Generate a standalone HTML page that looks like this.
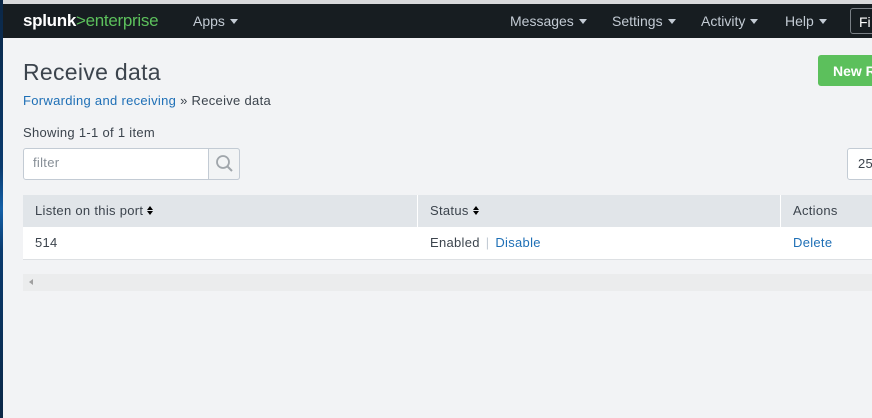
<!DOCTYPE html>
<html><head><style>
body{margin:0;width:872px;height:418px;overflow:hidden;background:#f2f3f5;font-family:"Liberation Sans",sans-serif;position:relative;color:#3c444d}
.a{position:absolute}
.nav{left:0;top:4px;width:872px;height:34px;background:#171d21;color:#c3cbd4;font-size:14px}
.nav span{position:absolute;top:9px}
.car{display:inline-block;border-left:4px solid transparent;border-right:4px solid transparent;border-top:5px solid #c3cbd4;vertical-align:middle;margin-left:5px;margin-top:-2px}
a{color:#1e6fb6;text-decoration:none}
.t13{font-size:13px;letter-spacing:0.3px}
</style></head><body>
<div class="a" style="left:0;top:0;width:872px;height:4px;background:#d8d9db"></div>
<div class="a nav">
<span style="left:23px;top:7px;font-size:17px;font-weight:bold;color:#fff;letter-spacing:-0.3px">splunk<span style="position:static;color:#5cc05c;font-weight:normal">&gt;enterprise</span></span>
<span style="left:193px">Apps<i class="car"></i></span>
<span style="left:510px">Messages<i class="car"></i></span>
<span style="left:612px">Settings<i class="car"></i></span>
<span style="left:701px">Activity<i class="car"></i></span>
<span style="left:785px">Help<i class="car"></i></span>
<div class="a" style="left:850px;top:4px;width:40px;height:26px;border:1px solid #7a8086;border-radius:3px;box-sizing:border-box;color:#fff;padding:5px 0 0 8px">Fi</div>
</div>
<div class="a" style="left:0;top:0;width:3px;height:418px;background:linear-gradient(#0b2746,#0a3a6e 40%,#1460a8 50%,#0a3a6e 60%,#0b2746)"></div>
<div class="a" style="left:23px;top:59px;font-size:23px;letter-spacing:0.3px;color:#3c444d">Receive data</div>
<div class="a t13" style="left:23px;top:93px"><a>Forwarding and receiving</a> » Receive data</div>
<div class="a" style="left:818px;top:55px;width:70px;height:31px;background:#5cc05c;border-radius:3px;color:#fff;font-weight:bold;font-size:14px;padding:8px 0 0 15px;box-sizing:border-box">New R</div>
<div class="a t13" style="left:23px;top:125px">Showing 1-1 of 1 item</div>
<div class="a" style="left:23px;top:148px;width:217px;height:32px;border:1px solid #c3cbd4;border-radius:3px;background:#fff;box-sizing:border-box"></div>
<div class="a t13" style="left:33px;top:155px;color:#868e96">filter</div>
<div class="a" style="left:208px;top:148px;width:32px;height:32px;border:1px solid #c3cbd4;border-radius:0 3px 3px 0;background:#f2f4f5;box-sizing:border-box">
<svg width="30" height="30" style="position:absolute;left:0;top:0"><circle cx="14" cy="13" r="6" fill="none" stroke="#a0a6ab" stroke-width="1.8"/><line x1="18.5" y1="17.5" x2="23" y2="22" stroke="#a0a6ab" stroke-width="2"/></svg></div>
<div class="a t13" style="left:847px;top:148px;width:40px;height:32px;border:1px solid #c3cbd4;border-radius:3px;background:#fff;box-sizing:border-box;padding:7px 0 0 10px">25</div>
<div class="a" style="left:23px;top:195px;width:849px;height:32px;background:#e1e5e9"></div>
<div class="a" style="left:417px;top:195px;width:1px;height:32px;background:#fff"></div>
<div class="a" style="left:780px;top:195px;width:1px;height:32px;background:#fff"></div>
<div class="a t13" style="left:35px;top:203px">Listen on this port <svg width="6" height="9" style="vertical-align:0"><path d="M0 4L3 0L6 4Z M0 5L3 9L6 5Z" fill="#000"/></svg></div>
<div class="a t13" style="left:430px;top:203px">Status <svg width="6" height="9" style="vertical-align:0"><path d="M0 4L3 0L6 4Z M0 5L3 9L6 5Z" fill="#000"/></svg></div>
<div class="a t13" style="left:793px;top:203px">Actions</div>
<div class="a" style="left:23px;top:227px;width:849px;height:32px;background:#fff;border-bottom:1px solid #dde0e3"></div>
<div class="a t13" style="left:35px;top:235px">514</div>
<div class="a t13" style="left:430px;top:235px">Enabled <span style="color:#c3cbd4;margin:0 2px">|</span> <a>Disable</a></div>
<div class="a t13" style="left:793px;top:235px"><a>Delete</a></div>
<div class="a" style="left:23px;top:274px;width:849px;height:17px;background:#ebeced"></div>
<div class="a" style="left:29px;top:279px;width:0;height:0;border-top:3px solid transparent;border-bottom:3px solid transparent;border-right:4px solid #a0a0a0"></div>
</body></html>
